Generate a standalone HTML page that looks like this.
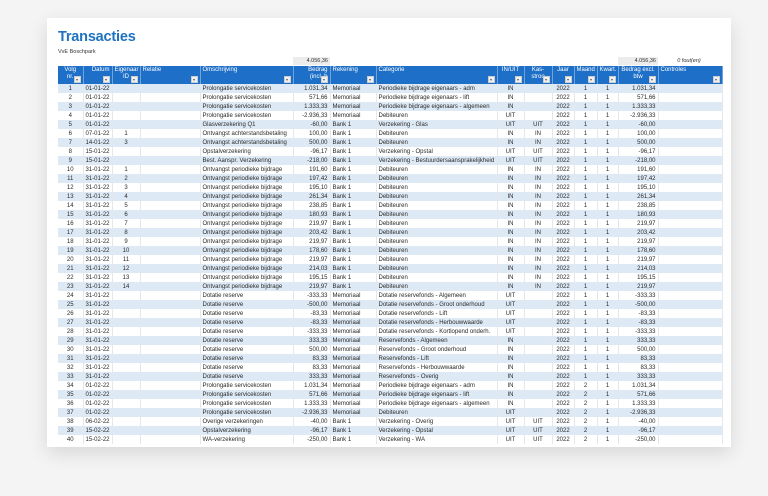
<!DOCTYPE html>
<html><head><meta charset="utf-8"><style>
*{margin:0;padding:0;box-sizing:border-box}
html,body{width:768px;height:496px;overflow:hidden;background:#f4f4f4;font-family:"Liberation Sans",sans-serif}
.card{position:absolute;left:47px;top:18px;width:684px;height:429px;background:#fff;box-shadow:0 6px 18px rgba(0,0,0,.12)}
h1{position:absolute;left:58px;top:29px;font-size:14.5px;color:#1f72c0;font-weight:bold;letter-spacing:-.2px}
.sub{position:absolute;left:58px;top:49px;font-size:5.5px;color:#333}
.sum{position:absolute;top:57px;height:8px;font-size:5.5px;color:#333;text-align:right;padding-right:2px;line-height:8px}
table{position:absolute;left:58px;top:66px;border-collapse:collapse;table-layout:fixed;width:664px;font-size:6px;color:#2a2a2a}
td{height:9px;line-height:8px;white-space:nowrap;overflow:hidden;border-right:1px solid #e3e8ee;padding:0 2px}
thead td{height:18px;background:#1e6fc7;color:#fff;vertical-align:top;position:relative;border-right:1px solid #6fa3dc;line-height:7px;padding-top:1px}
thead td i{position:absolute;right:2px;bottom:1px;width:7px;height:7px;background:#f0f0f0;border:1px solid #ccc}
thead td i:after{content:"";position:absolute;left:1.5px;top:2px;border:1.5px solid transparent;border-top:2px solid #555}
tbody tr:nth-child(odd) td{background:#dde9f5}
tbody td:nth-child(1),tbody td:nth-child(3),tbody td:nth-child(9),tbody td:nth-child(10),tbody td:nth-child(11),tbody td:nth-child(12),tbody td:nth-child(13){text-align:center}
tbody td:nth-child(6),tbody td:nth-child(14){text-align:right}
</style></head><body>
<div class="card"></div>
<h1>Transacties</h1>
<div class="sub">VvE Boschpark</div>
<div class="sum" style="left:293px;width:37px;background:#ececec">4.056,36</div>
<div class="sum" style="left:618px;width:40px;background:#ececec">4.056,36</div>
<div class="sum" style="left:658px;width:64px;font-style:italic;text-align:center">0 fout(en)</div>
<table>
<colgroup><col style="width:25px"><col style="width:29px"><col style="width:28px"><col style="width:60px"><col style="width:93px"><col style="width:37px"><col style="width:46px"><col style="width:121px"><col style="width:27px"><col style="width:28px"><col style="width:22px"><col style="width:23px"><col style="width:21px"><col style="width:40px"><col style="width:64px"></colgroup>
<thead><tr>
<td style="text-align:center">Volg<br>nr.<i></i></td><td style="text-align:right">Datum<i></i></td><td style="text-align:center">Eigenaar<br>ID<i></i></td><td>Relatie<i></i></td><td>Omschrijving<i></i></td><td style="text-align:right">Bedrag<br>(incl. b<i></i></td><td>Rekening<i></i></td><td>Categorie<i></i></td><td style="text-align:center">IN/UIT<i></i></td><td style="text-align:center">Kas-<br>stroo<i></i></td><td style="text-align:center">Jaar<i></i></td><td style="text-align:center">Maand<i></i></td><td style="text-align:center">Kwart.<i></i></td><td style="text-align:center">Bedrag excl.<br>btw<i></i></td><td>Controles<i></i></td>
</tr></thead>
<tbody>
<tr><td>1<td>01-01-22<td><td><td>Prolongatie servicekosten<td>1.031,34<td>Memoriaal<td>Periodieke bijdrage eigenaars - adm<td>IN<td><td>2022<td>1<td>1<td>1.031,34<td></tr>
<tr><td>2<td>01-01-22<td><td><td>Prolongatie servicekosten<td>571,66<td>Memoriaal<td>Periodieke bijdrage eigenaars - lift<td>IN<td><td>2022<td>1<td>1<td>571,66<td></tr>
<tr><td>3<td>01-01-22<td><td><td>Prolongatie servicekosten<td>1.333,33<td>Memoriaal<td>Periodieke bijdrage eigenaars - algemeen<td>IN<td><td>2022<td>1<td>1<td>1.333,33<td></tr>
<tr><td>4<td>01-01-22<td><td><td>Prolongatie servicekosten<td>-2.936,33<td>Memoriaal<td>Debiteuren<td>UIT<td><td>2022<td>1<td>1<td>-2.936,33<td></tr>
<tr><td>5<td>01-01-22<td><td><td>Glasverzekering Q1<td>-60,00<td>Bank 1<td>Verzekering - Glas<td>UIT<td>UIT<td>2022<td>1<td>1<td>-60,00<td></tr>
<tr><td>6<td>07-01-22<td>1<td><td>Ontvangst achterstandsbetaling<td>100,00<td>Bank 1<td>Debiteuren<td>IN<td>IN<td>2022<td>1<td>1<td>100,00<td></tr>
<tr><td>7<td>14-01-22<td>3<td><td>Ontvangst achterstandsbetaling<td>500,00<td>Bank 1<td>Debiteuren<td>IN<td>IN<td>2022<td>1<td>1<td>500,00<td></tr>
<tr><td>8<td>15-01-22<td><td><td>Opstalverzekering<td>-96,17<td>Bank 1<td>Verzekering - Opstal<td>UIT<td>UIT<td>2022<td>1<td>1<td>-96,17<td></tr>
<tr><td>9<td>15-01-22<td><td><td>Best. Aanspr. Verzekering<td>-218,00<td>Bank 1<td>Verzekering - Bestuurdersaansprakelijkheid<td>UIT<td>UIT<td>2022<td>1<td>1<td>-218,00<td></tr>
<tr><td>10<td>31-01-22<td>1<td><td>Ontvangst periodieke bijdrage<td>191,60<td>Bank 1<td>Debiteuren<td>IN<td>IN<td>2022<td>1<td>1<td>191,60<td></tr>
<tr><td>11<td>31-01-22<td>2<td><td>Ontvangst periodieke bijdrage<td>197,42<td>Bank 1<td>Debiteuren<td>IN<td>IN<td>2022<td>1<td>1<td>197,42<td></tr>
<tr><td>12<td>31-01-22<td>3<td><td>Ontvangst periodieke bijdrage<td>195,10<td>Bank 1<td>Debiteuren<td>IN<td>IN<td>2022<td>1<td>1<td>195,10<td></tr>
<tr><td>13<td>31-01-22<td>4<td><td>Ontvangst periodieke bijdrage<td>261,34<td>Bank 1<td>Debiteuren<td>IN<td>IN<td>2022<td>1<td>1<td>261,34<td></tr>
<tr><td>14<td>31-01-22<td>5<td><td>Ontvangst periodieke bijdrage<td>238,85<td>Bank 1<td>Debiteuren<td>IN<td>IN<td>2022<td>1<td>1<td>238,85<td></tr>
<tr><td>15<td>31-01-22<td>6<td><td>Ontvangst periodieke bijdrage<td>180,93<td>Bank 1<td>Debiteuren<td>IN<td>IN<td>2022<td>1<td>1<td>180,93<td></tr>
<tr><td>16<td>31-01-22<td>7<td><td>Ontvangst periodieke bijdrage<td>219,97<td>Bank 1<td>Debiteuren<td>IN<td>IN<td>2022<td>1<td>1<td>219,97<td></tr>
<tr><td>17<td>31-01-22<td>8<td><td>Ontvangst periodieke bijdrage<td>203,42<td>Bank 1<td>Debiteuren<td>IN<td>IN<td>2022<td>1<td>1<td>203,42<td></tr>
<tr><td>18<td>31-01-22<td>9<td><td>Ontvangst periodieke bijdrage<td>219,97<td>Bank 1<td>Debiteuren<td>IN<td>IN<td>2022<td>1<td>1<td>219,97<td></tr>
<tr><td>19<td>31-01-22<td>10<td><td>Ontvangst periodieke bijdrage<td>178,60<td>Bank 1<td>Debiteuren<td>IN<td>IN<td>2022<td>1<td>1<td>178,60<td></tr>
<tr><td>20<td>31-01-22<td>11<td><td>Ontvangst periodieke bijdrage<td>219,97<td>Bank 1<td>Debiteuren<td>IN<td>IN<td>2022<td>1<td>1<td>219,97<td></tr>
<tr><td>21<td>31-01-22<td>12<td><td>Ontvangst periodieke bijdrage<td>214,03<td>Bank 1<td>Debiteuren<td>IN<td>IN<td>2022<td>1<td>1<td>214,03<td></tr>
<tr><td>22<td>31-01-22<td>13<td><td>Ontvangst periodieke bijdrage<td>195,15<td>Bank 1<td>Debiteuren<td>IN<td>IN<td>2022<td>1<td>1<td>195,15<td></tr>
<tr><td>23<td>31-01-22<td>14<td><td>Ontvangst periodieke bijdrage<td>219,97<td>Bank 1<td>Debiteuren<td>IN<td>IN<td>2022<td>1<td>1<td>219,97<td></tr>
<tr><td>24<td>31-01-22<td><td><td>Dotatie reserve<td>-333,33<td>Memoriaal<td>Dotatie reservefonds - Algemeen<td>UIT<td><td>2022<td>1<td>1<td>-333,33<td></tr>
<tr><td>25<td>31-01-22<td><td><td>Dotatie reserve<td>-500,00<td>Memoriaal<td>Dotatie reservefonds - Groot onderhoud<td>UIT<td><td>2022<td>1<td>1<td>-500,00<td></tr>
<tr><td>26<td>31-01-22<td><td><td>Dotatie reserve<td>-83,33<td>Memoriaal<td>Dotatie reservefonds - Lift<td>UIT<td><td>2022<td>1<td>1<td>-83,33<td></tr>
<tr><td>27<td>31-01-22<td><td><td>Dotatie reserve<td>-83,33<td>Memoriaal<td>Dotatie reservefonds - Herbouwwaarde<td>UIT<td><td>2022<td>1<td>1<td>-83,33<td></tr>
<tr><td>28<td>31-01-22<td><td><td>Dotatie reserve<td>-333,33<td>Memoriaal<td>Dotatie reservefonds - Kortlopend onderh.<td>UIT<td><td>2022<td>1<td>1<td>-333,33<td></tr>
<tr><td>29<td>31-01-22<td><td><td>Dotatie reserve<td>333,33<td>Memoriaal<td>Reservefonds - Algemeen<td>IN<td><td>2022<td>1<td>1<td>333,33<td></tr>
<tr><td>30<td>31-01-22<td><td><td>Dotatie reserve<td>500,00<td>Memoriaal<td>Reservefonds - Groot onderhoud<td>IN<td><td>2022<td>1<td>1<td>500,00<td></tr>
<tr><td>31<td>31-01-22<td><td><td>Dotatie reserve<td>83,33<td>Memoriaal<td>Reservefonds - Lift<td>IN<td><td>2022<td>1<td>1<td>83,33<td></tr>
<tr><td>32<td>31-01-22<td><td><td>Dotatie reserve<td>83,33<td>Memoriaal<td>Reservefonds - Herbouwwaarde<td>IN<td><td>2022<td>1<td>1<td>83,33<td></tr>
<tr><td>33<td>31-01-22<td><td><td>Dotatie reserve<td>333,33<td>Memoriaal<td>Reservefonds - Overig<td>IN<td><td>2022<td>1<td>1<td>333,33<td></tr>
<tr><td>34<td>01-02-22<td><td><td>Prolongatie servicekosten<td>1.031,34<td>Memoriaal<td>Periodieke bijdrage eigenaars - adm<td>IN<td><td>2022<td>2<td>1<td>1.031,34<td></tr>
<tr><td>35<td>01-02-22<td><td><td>Prolongatie servicekosten<td>571,66<td>Memoriaal<td>Periodieke bijdrage eigenaars - lift<td>IN<td><td>2022<td>2<td>1<td>571,66<td></tr>
<tr><td>36<td>01-02-22<td><td><td>Prolongatie servicekosten<td>1.333,33<td>Memoriaal<td>Periodieke bijdrage eigenaars - algemeen<td>IN<td><td>2022<td>2<td>1<td>1.333,33<td></tr>
<tr><td>37<td>01-02-22<td><td><td>Prolongatie servicekosten<td>-2.936,33<td>Memoriaal<td>Debiteuren<td>UIT<td><td>2022<td>2<td>1<td>-2.936,33<td></tr>
<tr><td>38<td>06-02-22<td><td><td>Overige verzekeringen<td>-40,00<td>Bank 1<td>Verzekering - Overig<td>UIT<td>UIT<td>2022<td>2<td>1<td>-40,00<td></tr>
<tr><td>39<td>15-02-22<td><td><td>Opstalverzekering<td>-96,17<td>Bank 1<td>Verzekering - Opstal<td>UIT<td>UIT<td>2022<td>2<td>1<td>-96,17<td></tr>
<tr><td>40<td>15-02-22<td><td><td>WA-verzekering<td>-250,00<td>Bank 1<td>Verzekering - WA<td>UIT<td>UIT<td>2022<td>2<td>1<td>-250,00<td></tr>
</tbody></table>
</body></html>
